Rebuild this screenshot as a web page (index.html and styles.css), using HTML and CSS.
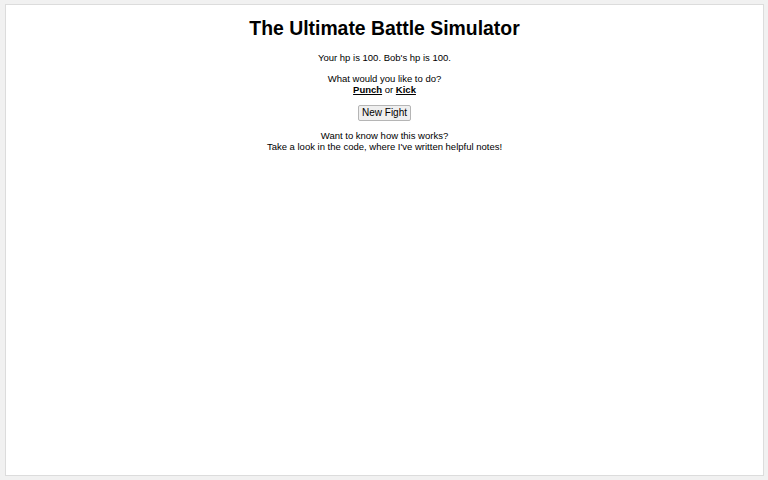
FILE: index.html
```html
<!DOCTYPE html>
<html lang="en">
<head>
  <meta charset="UTF-8" />
  <title>The Ultimate Battle Simulator</title>
  <link rel="stylesheet" href="styles.css">
</head>
<body>
  <main class="frame">
    <h1>The Ultimate Battle Simulator</h1>

    <p id="status">Your hp is 100. Bob's hp is 100.</p>

    <p class="choices">
      What would you like to do?<br>
      <a href="#" id="punch">Punch</a> or <a href="#" id="kick">Kick</a>
    </p>

    <button id="new-fight">New Fight</button>

    <p class="notes">
      Want to know how this works?<br>
      Take a look in the code, where I've written helpful notes!
    </p>
  </main>
</body>
</html>
```

FILE: styles.css
```css
html, body {
  margin: 0;
  height: 100%;
}

body {
  font-family: 'Liberation Sans', Arial, sans-serif;
  background: #f1f1f1;
  padding: 4px 4px 4px 5px;
  box-sizing: border-box;
  color: #000;
}

.frame {
  height: 100%;
  box-sizing: border-box;
  background: #fff;
  border: 1px solid #dcdcdc;
  text-align: center;
  font-size: 9.5px;
  padding-top: 12px;
}

h1 {
  font-size: 19.4px;
  line-height: 22px;
  margin: 0 0 13px;
}

p {
  margin: 0 0 10px;
  line-height: 11px;
}

a {
  color: #000;
  font-weight: bold;
}

/* plain grey button, like the browser's own */
button {
  font-family: inherit;
  font-size: 10px;
  line-height: 12px;
  padding: 1px 3px;
  margin-bottom: 9px;
  background: #efefef;
  border: 1px solid #b5b5b5;
  border-radius: 2px;
  color: #000;
}
```
